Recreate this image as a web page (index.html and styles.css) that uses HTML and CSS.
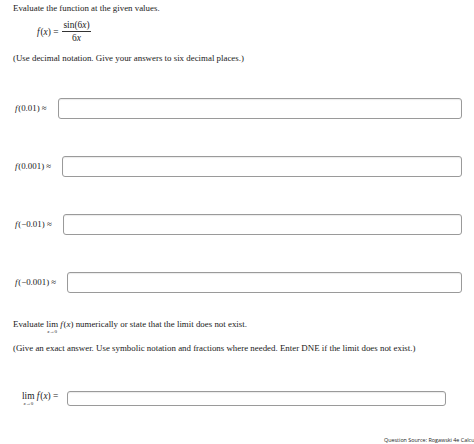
FILE: index.html
```html
<!DOCTYPE html>
<html>
<head>
<meta charset="utf-8">
<link rel="stylesheet" href="styles.css">
</head>
<body>
<div class="page">
  <p class="text intro">Evaluate the function at the given values.</p>
  <div class="formula">
    <span class="math"><i>f</i>&#8202;(<i>x</i>) =</span>
    <span class="frac">
      <span class="num">sin(6<i>x</i>)</span>
      <span class="den">6<i>x</i></span>
    </span>
  </div>
  <p class="text note">(Use decimal notation. Give your answers to six decimal places.)</p>
  <div class="answers">
    <div class="row"><span class="label"><i>f</i>&#8202;(0.01) ≈</span><span class="box"></span></div>
    <div class="row"><span class="label"><i>f</i>&#8202;(0.001) ≈</span><span class="box"></span></div>
    <div class="row"><span class="label"><i>f</i>&#8202;(−0.01) ≈</span><span class="box"></span></div>
    <div class="row"><span class="label"><i>f</i>&#8202;(−0.001) ≈</span><span class="box"></span></div>
  </div>
  <p class="text limq">Evaluate <span class="lim"><span class="limw">lim</span><span class="sub"><i>x</i>→0</span></span> <i>f</i>&#8202;(<i>x</i>) numerically or state that the limit does not exist.</p>
  <p class="text note2">(Give an exact answer. Use symbolic notation and fractions where needed. Enter DNE if the limit does not exist.)</p>
  <div class="row limrow"><span class="label limlabel"><span class="lim"><span class="limw">lim</span><span class="sub"><i>x</i>→0</span></span> <i>f</i>&#8202;(<i>x</i>) =</span><span class="box box-lim"></span></div>
  <div class="source">Question Source: Rogawski 4e Calculus: Early Transcendentals | Publisher: W. H. Freeman</div>
</div>
</body>
</html>
```
FILE: styles.css
```css
html, body {
  margin: 0;
  padding: 0;
  background: #fff;
}
.page {
  width: 474px;
  height: 444px;
  overflow: hidden;
  box-sizing: border-box;
  padding: 2px 12px 0 13px;
  font-family: "Liberation Serif", "Times New Roman", serif;
  color: #1a1a1a;
}
.text {
  margin: 0;
  font-size: 8.9px;
  line-height: 12px;
  white-space: nowrap;
}
.formula {
  display: flex;
  align-items: center;
  margin: 6px 0 0 24px;
  font-size: 9.4px;
  gap: 4px;
}
.frac {
  display: inline-flex;
  flex-direction: column;
  align-items: center;
}
.num {
  padding: 0 1px 1px;
  border-bottom: 1px solid #333;
  line-height: 10px;
}
.den {
  line-height: 10px;
  padding-top: 1px;
}
.note {
  margin-top: 9px;
}
.answers {
  display: flex;
  flex-direction: column;
  gap: 36px;
  margin-top: 33px;
}
.row {
  display: flex;
  align-items: center;
  height: 22px;
  padding-left: 2px;
}
.label {
  font-size: 8.9px;
  white-space: nowrap;
  margin-right: 11px;
}
.box {
  flex: 1;
  height: 21px;
  box-sizing: border-box;
  border: 1px solid #9a9a9a;
  border-radius: 3px;
  box-shadow: inset 0 1px 1px rgba(0,0,0,0.08);
  background: #fff;
}
.lim {
  display: inline-flex;
  flex-direction: column;
  align-items: center;
  vertical-align: baseline;
}
.limw {
  line-height: 9px;
}
.sub {
  font-size: 5px;
  line-height: 5px;
  white-space: nowrap;
}
.limq {
  margin-top: 26px;
  line-height: 10px;
}
.note2 {
  margin-top: 8px;
}
.limrow {
  margin-top: 36px;
  padding-left: 9px;
  padding-right: 16px;
  height: 16px;
}
.limlabel {
  font-size: 9.4px;
  margin-right: 9px;
}
.box-lim {
  height: 15px;
}
.source {
  margin-top: 30px;
  margin-left: 371px;
  font-family: "Open Sans", "Liberation Sans", sans-serif;
  font-size: 5.4px;
  white-space: nowrap;
  color: #222;
}
```
